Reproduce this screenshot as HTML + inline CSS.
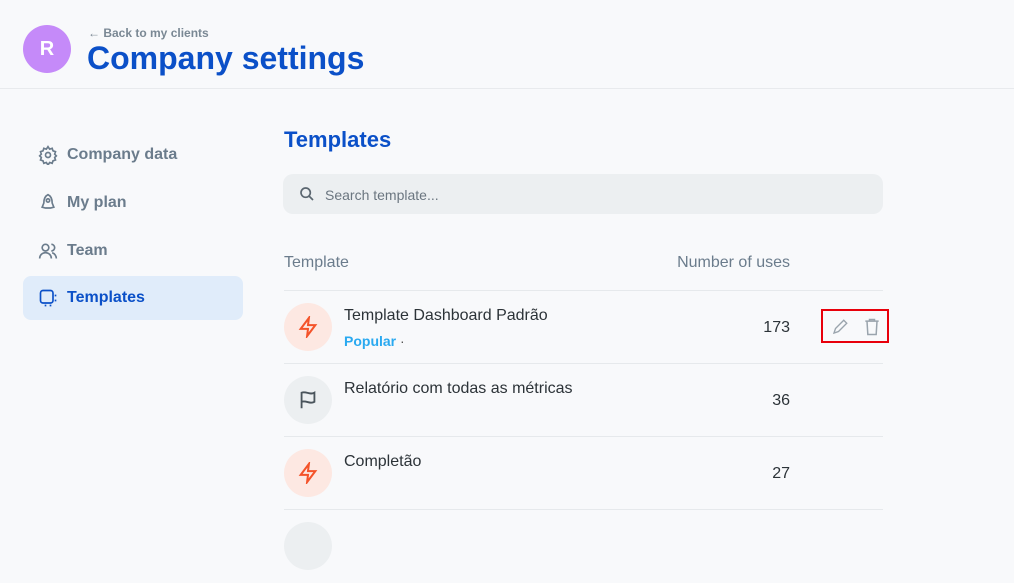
<!DOCTYPE html><html><head><style>
body{margin:0;width:1014px;height:525px;background:#f8f9fb;font-family:"Liberation Sans",sans-serif;overflow:hidden;position:relative}
.a{position:absolute}
.nav{position:absolute;left:23px;width:220px;height:44px;border-radius:8px;display:flex;align-items:center;font-size:16px;font-weight:bold;color:#6b7c8c}
.nav svg{margin-left:15px;margin-right:9px}
.row{position:absolute;left:284px;width:599px;height:73px;border-top:1px solid #e6e9ec}
.ic{position:absolute;left:0;top:12px;width:48px;height:48px;border-radius:50%;display:flex;align-items:center;justify-content:center}
.nm{position:absolute;left:60px;top:16px;font-size:16px;color:#2c3338}
.ct{position:absolute;right:93px;font-size:16px;color:#2c3338}
</style></head><body>
<div class="a" style="left:0;top:88px;width:1014px;border-top:1px solid #e8eaed"></div>
<div class="a" style="left:23px;top:25px;width:48px;height:48px;border-radius:50%;background:#c58af9;color:#fff;font-weight:bold;font-size:20px;display:flex;align-items:center;justify-content:center">R</div>
<div class="a" style="left:88px;top:26px;font-size:12px;font-weight:bold;color:#7a8894">← Back to my clients</div>
<div class="a" style="left:87px;top:40px;font-size:32px;font-weight:bold;color:#0b50c8">Company settings</div>

<div class="nav" style="top:133px"><svg width="20" height="20" viewBox="0 0 24 24" fill="none" stroke="#6b7c8c" stroke-width="2"><circle cx="12" cy="12" r="3"/><path d="M12 2l2 3 3-1 1 3 3 1-1 3 2 2-2 2 1 3-3 1-1 3-3-1-2 3-2-3-3 1-1-3-3-1 1-3-2-2 2-2-1-3 3-1 1-3 3 1z"/></svg>Company data</div>
<div class="nav" style="top:181px"><svg width="20" height="20" viewBox="0 0 24 24" fill="none" stroke="#6b7c8c" stroke-width="2"><path d="M12 2c4 2 5 6 5 10l2 5-4 1H9l-4-1 2-5c0-4 1-8 5-10z"/><circle cx="12" cy="9" r="2"/></svg>My plan</div>
<div class="nav" style="top:229px"><svg width="20" height="20" viewBox="0 0 24 24" fill="none" stroke="#6b7c8c" stroke-width="2"><circle cx="9" cy="8" r="4"/><path d="M2 21c0-4 3-7 7-7s7 3 7 7M16 4a4 4 0 010 8M22 21c0-3-2-6-5-7"/></svg>Team</div>
<div class="nav" style="top:276px;background:#e0ecfa;color:#0b50c8"><svg width="20" height="20" viewBox="0 0 24 24" fill="none" stroke="#0b50c8" stroke-width="2"><rect x="3" y="3" width="15" height="15" rx="3"/><path d="M21 8v2M21 14v2M8 21h2M14 21h2" stroke-dasharray="2 2"/></svg>Templates</div>

<div class="a" style="left:284px;top:127px;font-size:22px;font-weight:bold;color:#0b50c8">Templates</div>
<div class="a" style="left:283px;top:174px;width:600px;height:40px;border-radius:10px;background:#eceff1"></div>
<svg class="a" style="left:299px;top:186px" width="16" height="16" viewBox="0 0 24 24" fill="none" stroke="#5b6670" stroke-width="2.5"><circle cx="10" cy="10" r="7"/><path d="M15 15l6 6"/></svg>
<div class="a" style="left:325px;top:187px;font-size:14px;color:#6b7680">Search template...</div>
<div class="a" style="left:284px;top:254px;font-size:16px;color:#6b7c8c">Template</div>
<div class="a" style="right:224px;top:254px;font-size:16px;color:#6b7c8c">Number of uses</div>

<div class="row" style="top:290px"><div class="ic" style="background:#fde8e2"><svg width="22" height="22" viewBox="0 0 24 24" fill="none" stroke="#f4532a" stroke-width="2.2"><path d="M13 2L4 14h8l-1 8 9-12h-8z"/></svg></div><div class="nm">Template Dashboard Padrão</div><div class="a" style="left:60px;top:42px;font-size:14px;font-weight:bold;color:#29a9f0">Popular <span style="color:#555;font-weight:normal">·</span></div><div class="ct" style="top:28px">173</div>
<svg class="a" style="left:547px;top:27px" width="18" height="18" viewBox="0 0 24 24" fill="none" stroke="#9aa4ad" stroke-width="1.8"><path d="M4 20l2-6L17 3l4 4L10 18z"/></svg>
<svg class="a" style="left:578px;top:26px" width="20" height="20" viewBox="0 0 24 24" fill="none" stroke="#9aa4ad" stroke-width="1.8"><path d="M4 5h16M9 5V3h6v2M6 5l1 16h10l1-16"/></svg>
<div class="a" style="left:537px;top:18px;width:64px;height:30px;border:2px solid #e8000b"></div></div>
<div class="row" style="top:363px"><div class="ic" style="background:#eceff1"><svg width="22" height="22" viewBox="0 0 24 24" fill="none" stroke="#4a545c" stroke-width="2"><path d="M5 21V4c5-2 9 3 14 0v10c-5 3-9-2-14 0"/></svg></div><div class="nm">Relatório com todas as métricas</div><div class="ct" style="top:28px">36</div></div>
<div class="row" style="top:436px"><div class="ic" style="background:#fde8e2"><svg width="22" height="22" viewBox="0 0 24 24" fill="none" stroke="#f4532a" stroke-width="2.2"><path d="M13 2L4 14h8l-1 8 9-12h-8z"/></svg></div><div class="nm">Completão</div><div class="ct" style="top:28px">27</div></div>
<div class="row" style="top:509px"><div class="ic" style="background:#eceff1"></div></div>
</body></html>
